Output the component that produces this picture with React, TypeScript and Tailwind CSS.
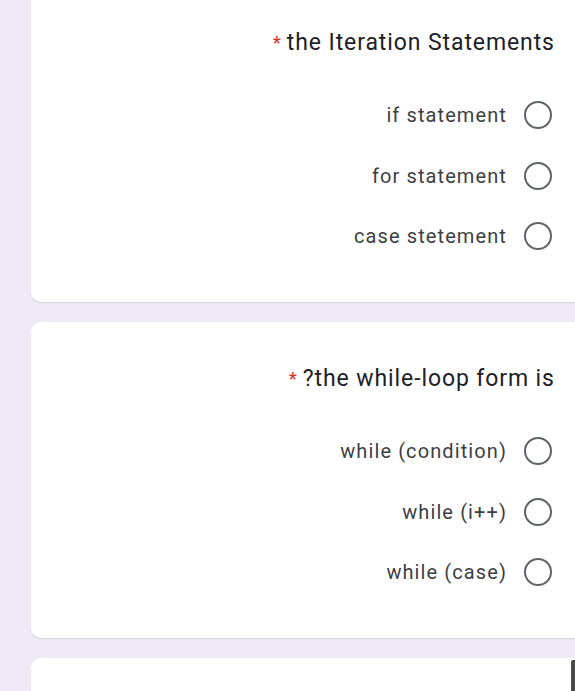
import React from "react";

function Radio() {
  return <span className="block w-[28px] h-[28px] rounded-full border-[2.5px] border-[#5f6368] shrink-0" />;
}

function Question({ title, options, first }: { title: string; options: string[]; first?: boolean }) {
  return (
    <div
      className={
        "bg-white rounded-l-[10px] shadow-[0_1px_1px_#d8d6e2] pr-[21px] pb-[35.5px] " +
        (first ? "pt-[27px] rounded-tl-none" : "pt-[41px]")
      }
    >
      <div className="flex justify-end items-center h-[32px] text-[23px] text-[#202124] tracking-[0.9px]">
        <span className="text-[#d93025] mr-[5px] text-[19px]">*</span>
        <span className="mr-[-0.9px]">{title}</span>
      </div>
      <div className="mt-[26px] flex flex-col">
        {options.map((o) => (
          <div key={o} className="h-[60.5px] flex items-center justify-end pr-[2px]">
            <span className="text-[20px] text-[#3c4043] tracking-[1.1px] mr-[17px]">{o}</span>
            <Radio />
          </div>
        ))}
      </div>
    </div>
  );
}

export default function App() {
  return (
    <div
      className="w-[575px] h-[691px] overflow-hidden bg-[#edeaf6] pl-[31px] flex flex-col gap-[20px]"
      style={{ fontFamily: "Roboto, 'Noto Sans', sans-serif" }}
    >
      <Question first title="the Iteration Statements" options={["if statement", "for statement", "case stetement"]} />
      <Question title="?the while-loop form is" options={["while (condition)", "while (i++)", "while (case)"]} />
      <div className="bg-white rounded-l-[10px] h-[60px] flex justify-end pt-[2px]">
        <span className="block w-[4px] h-[40px] bg-[#4a4a4a] rounded-l-[2px]" />
      </div>
    </div>
  );
}
